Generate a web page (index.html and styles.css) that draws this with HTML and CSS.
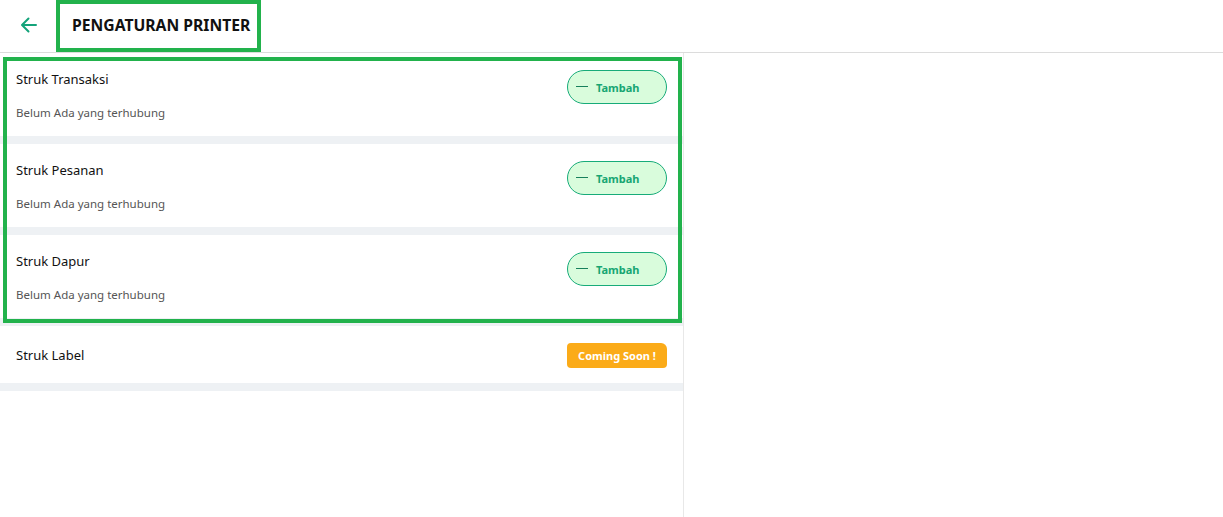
FILE: index.html
```html
<!DOCTYPE html>
<html lang="id">
<head>
<meta charset="utf-8">
<title>Pengaturan Printer</title>
<link rel="stylesheet" href="styles.css">
</head>
<body>
<header class="topbar">
  <button class="back" aria-label="Kembali">
    <svg width="20" height="20" viewBox="0 0 20 20" fill="none" stroke="#14a37a" stroke-width="2" stroke-linecap="round" stroke-linejoin="round"><path d="M17 10H3.5M9.5 3.5L3 10l6.5 6.5"/></svg>
  </button>
  <h1 class="title">PENGATURAN PRINTER</h1>
</header>
<main class="content">
  <section class="panel">
    <div class="group">
      <div class="row">
        <div class="info">
          <div class="name">Struk Transaksi</div>
          <div class="status">Belum Ada yang terhubung</div>
        </div>
        <button class="add"><span class="dash"></span>Tambah</button>
      </div>
      <div class="sep"></div>
      <div class="row">
        <div class="info">
          <div class="name">Struk Pesanan</div>
          <div class="status">Belum Ada yang terhubung</div>
        </div>
        <button class="add"><span class="dash"></span>Tambah</button>
      </div>
      <div class="sep"></div>
      <div class="row">
        <div class="info">
          <div class="name">Struk Dapur</div>
          <div class="status">Belum Ada yang terhubung</div>
        </div>
        <button class="add"><span class="dash"></span>Tambah</button>
      </div>
      <div class="outline"></div>
    </div>
    <div class="sep"></div>
    <div class="row row-simple">
      <div class="name">Struk Label</div>
      <span class="soon">Coming Soon !</span>
    </div>
    <div class="sep"></div>
  </section>
  <section class="side"></section>
</main>
</body>
</html>
```

FILE: styles.css
```css
* { box-sizing: border-box; }
html, body { margin: 0; padding: 0; height: 100%; }
body {
  font-family: "Noto Sans", "Open Sans", sans-serif;
  color: #111;
  background: #fff;
  display: flex;
  flex-direction: column;
}
.topbar {
  height: 53px;
  border-bottom: 1px solid #dcdcdc;
  display: flex;
  align-items: flex-start;
  flex-shrink: 0;
}
.back {
  width: 56px;
  height: 52px;
  border: 0;
  background: none;
  padding: 0 0 2px 2px;
  display: flex;
  align-items: center;
  justify-content: center;
  cursor: pointer;
}
.title {
  margin: 0;
  height: 52px;
  padding: 0 7px 0 12px;
  border: 4px solid #22b24c;
  font-size: 15.7px;
  font-weight: 700;
  line-height: 43px;
  letter-spacing: 0;
  color: #111;
}
.content {
  flex: 1;
  display: flex;
}
.panel {
  width: 684px;
  border-right: 1px solid #e8e8e8;
}
.side { flex: 1; }
.group { position: relative; }
.outline {
  position: absolute;
  left: 3px;
  top: 4px;
  width: 679px;
  bottom: -5px;
  border: 4px solid #22b24c;
  pointer-events: none;
}
.row {
  height: 83px;
  padding: 17px 16px 0 16px;
  display: flex;
  justify-content: space-between;
  align-items: flex-start;
}
.name {
  font-size: 13px;
  line-height: 18px;
  color: #111;
}
.status {
  margin-top: 17px;
  font-size: 11.5px;
  line-height: 16px;
  color: #555;
}
.sep {
  height: 8px;
  background: #eef1f4;
}
.add {
  width: 100px;
  height: 34px;
  border: 1px solid #17ab79;
  border-radius: 17px;
  background: #d9fcdc;
  color: #17a673;
  font-family: inherit;
  font-size: 11px;
  font-weight: 700;
  display: flex;
  align-items: center;
  padding: 0 0 0 8px;
  gap: 8px;
  cursor: pointer;
}
.dash {
  width: 12px;
  height: 1px;
  background: #17805c;
  margin-top: -2px;
}
.row-simple {
  height: 57px;
  padding: 1px 16px 0;
  align-items: center;
}
.soon {
  width: 100px;
  height: 25px;
  background: #fbab18;
  color: #fff;
  font-size: 11px;
  font-weight: 700;
  border-radius: 4px 6px 4px 4px;
  display: flex;
  align-items: center;
  justify-content: center;
}
```
